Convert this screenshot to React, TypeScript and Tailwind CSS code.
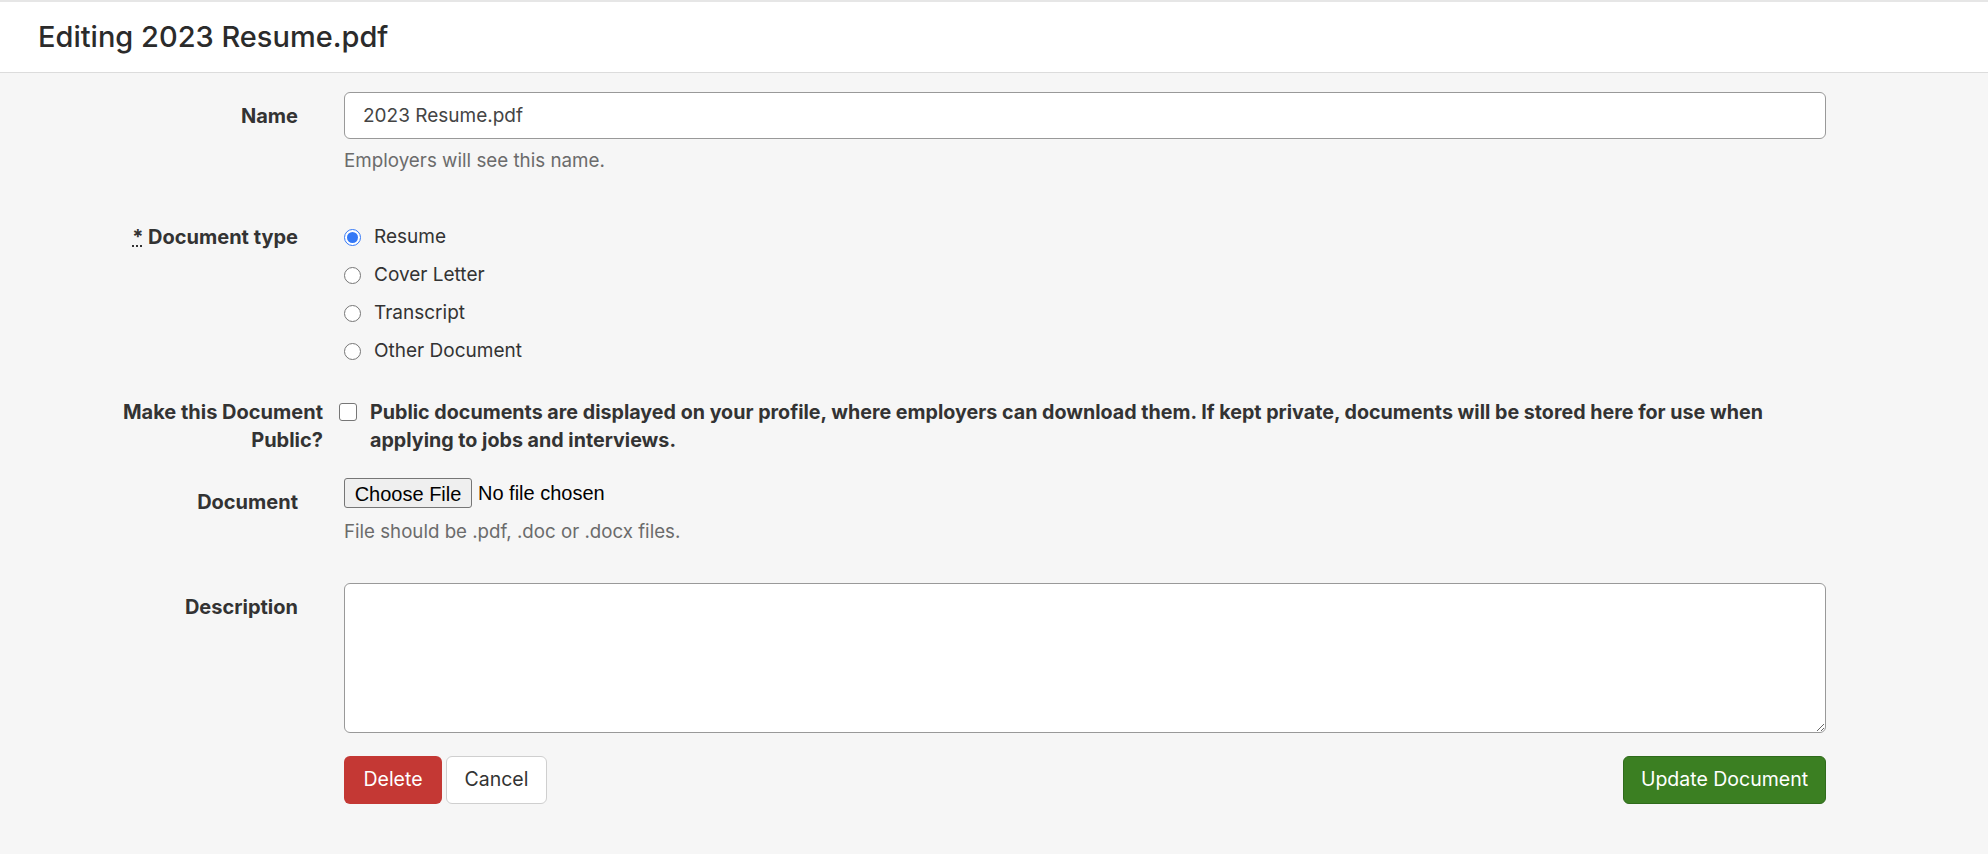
import { type ReactNode } from "react";

type RowProps = {
  label: ReactNode;
  children: ReactNode;
  className?: string;
};

function FormRow({ label, children, className = "" }: RowProps) {
  return (
    <div className={`flex ${className}`}>
      <div className="w-[298px] shrink-0 pt-[12px] text-right text-[20px] font-bold leading-[24px] text-[#333]">
        {label}
      </div>
      <div className="ml-[46px] min-w-0 flex-1">{children}</div>
    </div>
  );
}

function Radio({ checked, label }: { checked?: boolean; label: string }) {
  return (
    <label className="flex h-[38px] items-center">
      {checked ? (
        <span className="flex h-[17px] w-[17px] items-center justify-center rounded-full border-[1.5px] border-[#3478f6] bg-white">
          <span className="h-[11px] w-[11px] rounded-full bg-[#3478f6]" />
        </span>
      ) : (
        <span className="h-[17px] w-[17px] rounded-full border border-[#767676] bg-white" />
      )}
      <span className="ml-[13px] text-[19px] text-[#333]">{label}</span>
    </label>
  );
}

export default function App() {
  return (
    <div className="min-h-screen bg-[#f6f6f6] font-['Inter',sans-serif] text-[#333]">
      <header className="flex h-[73px] items-center border-t-2 border-b border-t-[#e6e6e6] border-b-[#dcdcdc] bg-white px-[38px]">
        <h1 className="text-[29px] font-medium text-[#2b2b2b]">Editing 2023 Resume.pdf</h1>
      </header>

      <form className="pr-[162px] pt-[19px]">
        <FormRow label="Name">
          <input
            type="text"
            defaultValue="2023 Resume.pdf"
            className="h-[47px] w-full rounded-[6px] border border-[#999] bg-white px-[18px] text-[19px] text-[#444] outline-none"
          />
          <p className="mt-[10px] text-[18.8px] leading-[24px] text-[#6b6b6b]">Employers will see this name.</p>
        </FormRow>

        <FormRow
          className="mt-[40px]"
          label={
            <>
              <abbr title="required" className="underline decoration-dotted">*</abbr> Document type
            </>
          }
        >
          <div className="pt-[5px]">
            <Radio checked label="Resume" />
            <Radio label="Cover Letter" />
            <Radio label="Transcript" />
            <Radio label="Other Document" />
          </div>
        </FormRow>

        <div className="mt-[28px] flex">
          <div className="w-[323px] shrink-0 text-right text-[20px] font-bold leading-[28px] text-[#333]">
            Make this Document
            <br />
            Public?
          </div>
          <span className="ml-[16px] mt-[5px] h-[18px] w-[18px] shrink-0 rounded-[3px] border border-[#767676] bg-white" />
          <p className="ml-[13px] text-[19.7px] font-bold leading-[28px] text-[#333]">
            Public documents are displayed on your profile, where employers can download them. If kept private, documents will be stored here for use when
            <br />
            applying to jobs and interviews.
          </p>
        </div>

        <FormRow className="mt-[24px]" label="Document">
          <div className="flex items-center">
            <button
              type="button"
              className="h-[30px] w-[128px] rounded-[3px] border border-[#767676] bg-[#efefef] font-['Liberation_Sans',sans-serif] text-[20px] text-black"
            >
              Choose File
            </button>
            <span className="ml-[6px] font-['Liberation_Sans',sans-serif] text-[20px] text-black">No file chosen</span>
          </div>
          <p className="mt-[12px] text-[18.7px] leading-[24px] text-[#6b6b6b]">File should be .pdf, .doc or .docx files.</p>
        </FormRow>

        <FormRow className="mt-[39px]" label="Description">
          <textarea className="block h-[150px] w-full rounded-[6px] border border-[#999] bg-white px-[18px] py-[10px] text-[19px] outline-none" />
          <div className="mt-[23px] flex items-center">
            <button
              type="button"
              className="h-[48px] w-[98px] rounded-[6px] bg-[#c43834] text-[19.5px] text-white"
            >
              Delete
            </button>
            <button
              type="button"
              className="ml-[4px] h-[48px] w-[101px] rounded-[6px] border border-[#cfcfcf] bg-white text-[19.5px] text-[#333]"
            >
              Cancel
            </button>
            <button
              type="button"
              className="ml-auto h-[48px] w-[203px] rounded-[6px] border border-[#2f6b1c] bg-[#3b7f22] text-[19.5px] text-white"
            >
              Update Document
            </button>
          </div>
        </FormRow>
      </form>
    </div>
  );
}
